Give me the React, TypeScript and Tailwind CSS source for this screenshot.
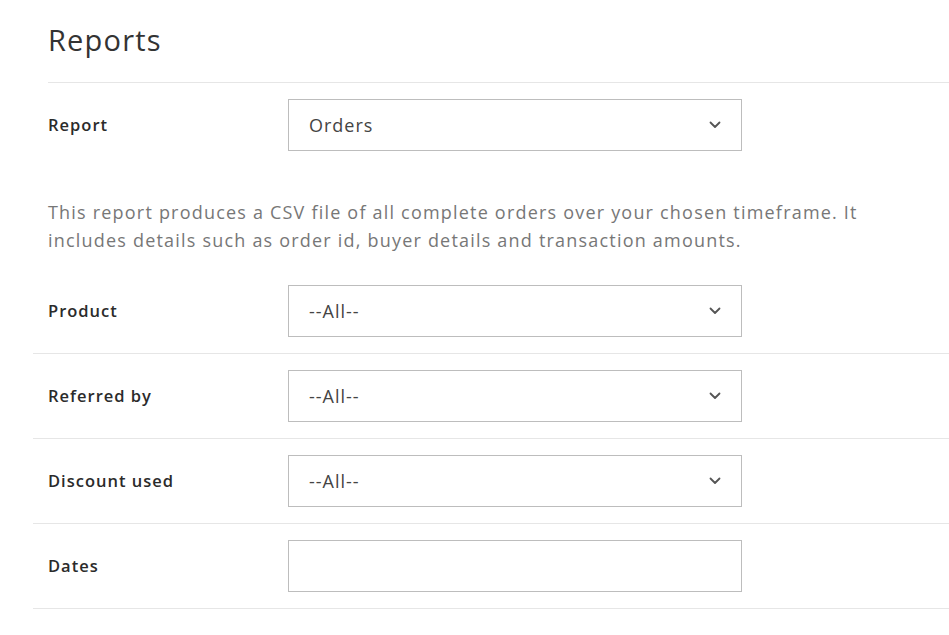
import React from "react";

const Chevron = () => (
  <svg width="12" height="8" viewBox="0 0 12 8" fill="none" className="shrink-0">
    <path d="M1.5 1.5L6 6L10.5 1.5" stroke="#555" strokeWidth="1.8" strokeLinecap="round" strokeLinejoin="round" />
  </svg>
);

const SelectBox = ({ value }: { value: string }) => (
  <div className="flex h-[52px] w-[454px] items-center justify-between border border-[#bdbdbd] bg-white pl-[20px] pr-[20px]">
    <span className="text-[18px] tracking-[1px] text-[#444]">{value}</span>
    <Chevron />
  </div>
);

const Label = ({ children }: { children: React.ReactNode }) => (
  <div className="w-[240px] text-[16.5px] font-semibold tracking-[1px] text-[#2b2b2b]">{children}</div>
);

const Row = ({ label, children }: { label: string; children: React.ReactNode }) => (
  <div className="flex items-center border-b border-[#e6e6e6] px-[15px] pt-[16px] pb-[16px]">
    <Label>{label}</Label>
    {children}
  </div>
);

export default function App() {
  return (
    <div className="min-h-screen bg-white" style={{ fontFamily: "'Open Sans', sans-serif" }}>
      <div className="pl-[48px] pt-[20px]">
        <h1 className="text-[29px] leading-[40px] font-normal tracking-[1.2px] text-[#333]">Reports</h1>
        <div className="mt-[22px] border-t border-[#e6e6e6]" />
        <div className="flex items-center pt-[16px]">
          <Label>Report</Label>
          <SelectBox value="Orders" />
        </div>
        <p className="mt-[47px] w-[830px] text-[18px] leading-[28px] tracking-[1.2px] text-[#777]">
          This report produces a CSV file of all complete orders over your chosen timeframe. It includes details such as order id, buyer details and transaction amounts.
        </p>
      </div>
      <div className="ml-[33px] mt-[15px]">
        <Row label="Product">
          <SelectBox value="--All--" />
        </Row>
        <Row label="Referred by">
          <SelectBox value="--All--" />
        </Row>
        <Row label="Discount used">
          <SelectBox value="--All--" />
        </Row>
        <Row label="Dates">
          <div className="h-[52px] w-[454px] border border-[#bdbdbd] bg-white" />
        </Row>
      </div>
    </div>
  );
}
